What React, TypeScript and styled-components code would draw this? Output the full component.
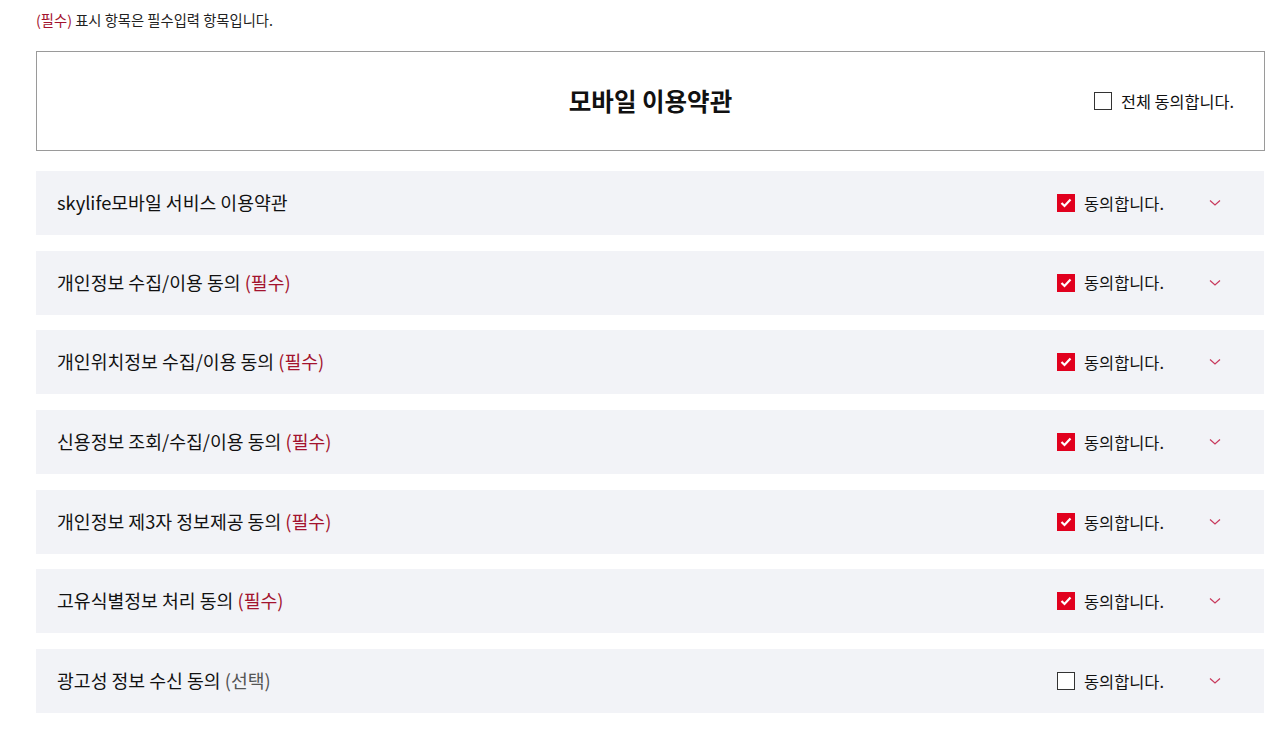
import React from "react";
import styled, { createGlobalStyle } from "styled-components";

const Global = createGlobalStyle`
  html, body { margin: 0; padding: 0; background: #fff; }
  body { font-family: "Noto Sans CJK KR", "Noto Sans", sans-serif; color: #111; }
  * { box-sizing: border-box; }
`;

const Page = styled.div`
  padding: 8px 16px 0 36px;
  width: 1280px;
`;

const Note = styled.p`
  margin: 0;
  font-size: 14.3px;
  line-height: 23px;
  color: #222;
`;

const Red = styled.span`
  color: #a3132e;
`;

const Gray = styled.span`
  color: #555;
`;

const Header = styled.div`
  margin-top: 20px;
  width: 1229px;
  height: 100px;
  border: 1px solid #9a9a9a;
  position: relative;
  display: flex;
  align-items: center;
  justify-content: center;
`;

const Title = styled.h2`
  margin: 0;
  font-size: 24.5px;
  font-weight: 700;
  color: #111;
  line-height: 1;
`;

const AllAgree = styled.label`
  position: absolute;
  right: 30px;
  top: 50%;
  transform: translateY(-50%);
  display: flex;
  align-items: center;
  gap: 9px;
  font-size: 16.3px;
`;

const List = styled.div`
  margin-top: 20px;
  display: flex;
  flex-direction: column;
  gap: 15.7px;
  width: 1228px;
`;

const Row = styled.div`
  height: 64px;
  background: #f2f3f7;
  display: flex;
  align-items: center;
  padding: 0 43px 0 21px;
`;

const RowTitle = styled.span`
  flex: 1;
  font-size: 18.3px;
  color: #111;
  line-height: 1;
  padding-bottom: 2px;
`;

const Agree = styled.label`
  display: flex;
  align-items: center;
  gap: 9px;
  font-size: 16.4px;
  width: 152px;
  line-height: 1;
`;

const Box = styled.span<{ $checked?: boolean }>`
  width: 18px;
  height: 18px;
  flex: none;
  display: inline-flex;
  align-items: center;
  justify-content: center;
  background: ${(p) => (p.$checked ? "#e1001e" : "#fff")};
  border: ${(p) => (p.$checked ? "none" : "1.5px solid #333")};
`;

const Chevron = styled.svg`
  width: 12px;
  height: 8px;
`;

const rows: { t: string; tag?: string; req?: boolean; checked: boolean }[] = [
  { t: "skylife모바일 서비스 이용약관", checked: true },
  { t: "개인정보 수집/이용 동의 ", tag: "(필수)", req: true, checked: true },
  { t: "개인위치정보 수집/이용 동의 ", tag: "(필수)", req: true, checked: true },
  { t: "신용정보 조회/수집/이용 동의 ", tag: "(필수)", req: true, checked: true },
  { t: "개인정보 제3자 정보제공 동의 ", tag: "(필수)", req: true, checked: true },
  { t: "고유식별정보 처리 동의 ", tag: "(필수)", req: true, checked: true },
  { t: "광고성 정보 수신 동의 ", tag: "(선택)", req: false, checked: false },
];

export default function App() {
  return (
    <>
      <Global />
      <Page>
        <Note>
          <Red>(필수)</Red> 표시 항목은 필수입력 항목입니다.
        </Note>
        <Header>
          <Title>모바일 이용약관</Title>
          <AllAgree>
            <Box />
            전체 동의합니다.
          </AllAgree>
        </Header>
        <List>
          {rows.map((r, i) => (
            <Row key={i}>
              <RowTitle>
                {r.t}
                {r.tag && (r.req ? <Red>{r.tag}</Red> : <Gray>{r.tag}</Gray>)}
              </RowTitle>
              <Agree>
                <Box $checked={r.checked}>
                  {r.checked && (
                    <svg width="12" height="10" viewBox="0 0 12 10">
                      <path d="M1.5 5 L4.5 8 L10.5 1.5" fill="none" stroke="#fff" strokeWidth="2.2" />
                    </svg>
                  )}
                </Box>
                동의합니다.
              </Agree>
              <Chevron viewBox="0 0 12 8">
                <path d="M1 1.5 L6 6 L11 1.5" fill="none" stroke="#c8395c" strokeWidth="1.2" />
              </Chevron>
            </Row>
          ))}
        </List>
      </Page>
    </>
  );
}
